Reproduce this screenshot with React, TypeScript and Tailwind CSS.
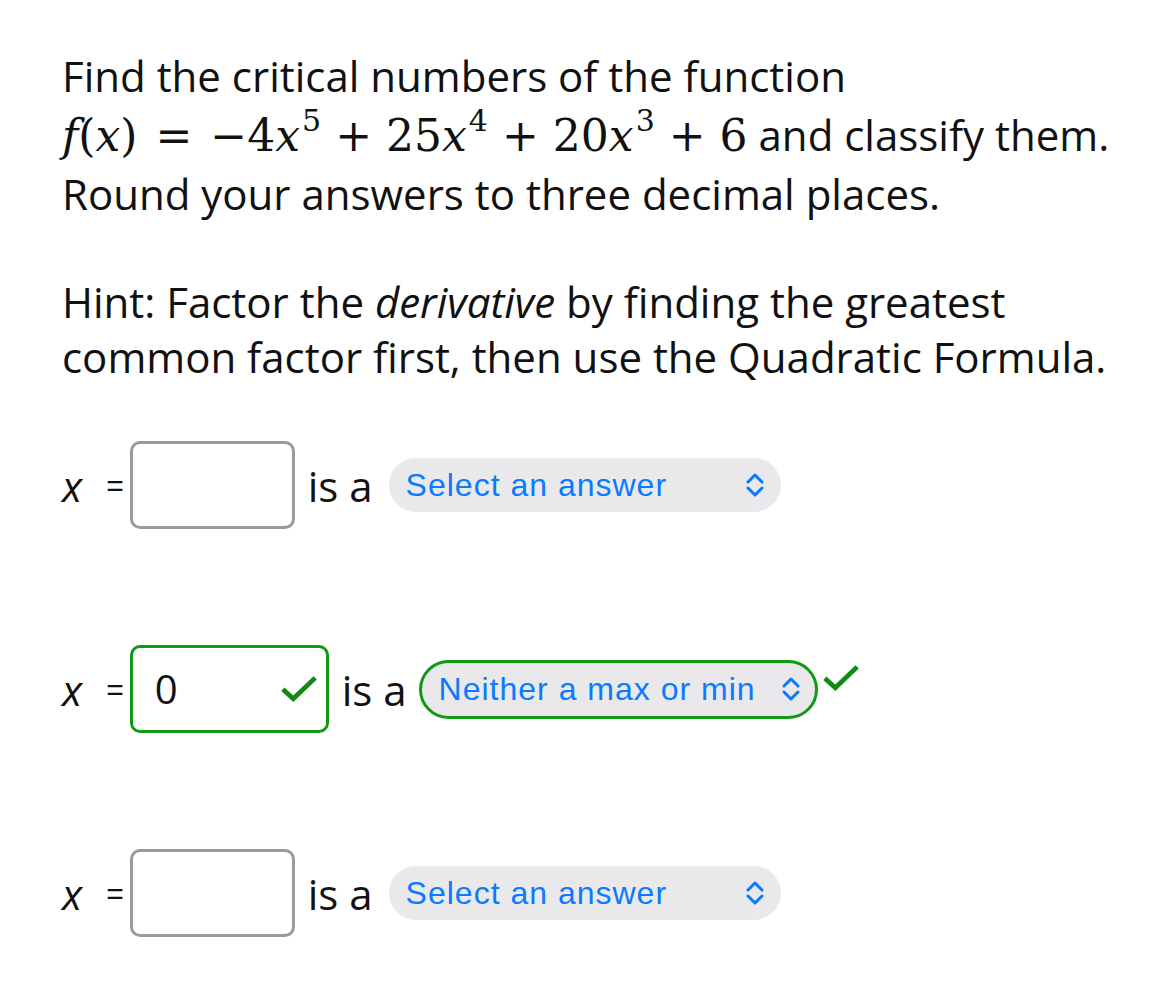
import React from "react";

const body = "font-['Open_Sans',sans-serif]";
const mathCls = "font-['DejaVu_Serif',serif] text-[44px] leading-none";

const Chevrons = () => (
  <svg width="20" height="26" viewBox="0 0 20 26" fill="none" stroke="#0a7aff" strokeWidth="3" strokeLinecap="round" strokeLinejoin="round">
    <path d="M3 10 L10 3 L17 10" />
    <path d="M3 16 L10 23 L17 16" />
  </svg>
);

const Check = ({ size = 36 }: { size?: number }) => (
  <svg width={size} height={size * 0.75} viewBox="0 0 40 30" fill="none" stroke="#118a11" strokeWidth="5" strokeLinejoin="miter">
    <path d="M3 15 L14 25 L37 3" />
  </svg>
);

const Sup = ({ children }: { children: React.ReactNode }) => (
  <span className="text-[30px] relative -top-[20px] ml-[2px]">{children}</span>
);

const Op = ({ children, wide }: { children: React.ReactNode; wide?: boolean }) => (
  <span className={wide ? "mx-[18px]" : "mx-[14px]"}>{children}</span>
);

type RowProps = {
  value?: string;
  correct?: boolean;
  answer: string;
};

const AnswerRow = ({ value, correct, answer }: RowProps) => (
  <div className="flex items-center h-[100px]">
    <span className={`${body} italic text-[42px]`}>x</span>
    <span className="font-['Liberation_Sans',sans-serif] text-[30px] ml-[24px] mr-[6px]">=</span>
    <div
      className={`flex items-center justify-between h-[88px] rounded-[10px] border-[3px] ${
        correct ? "w-[199px] border-[#119a11] pl-[22px] pr-[8px]" : "w-[165px] border-[#9a9a9a]"
      }`}
    >
      {value && <span className={`${body} text-[40px]`}>{value}</span>}
      {correct && <Check size={38} />}
    </div>
    <span className={`${body} text-[42px] ml-[13px] ${correct ? "mr-[12px]" : "mr-[16px]"}`}>is a</span>
    <div
      className={`flex items-center justify-between rounded-full bg-[#e9e9ec] font-['Liberation_Sans',sans-serif] text-[32px] tracking-[1px] text-[#0a7aff] ${
        correct
          ? "w-[399px] h-[59px] border-[3px] border-[#119a11] pl-[17px] pr-[14px]"
          : "w-[392px] h-[54px] pl-[17px] pr-[16px]"
      }`}
    >
      <span>{answer}</span>
      <Chevrons />
    </div>
    {correct && (
      <div className="ml-[4px] -mt-[22px]">
        <Check size={38} />
      </div>
    )}
  </div>
);

export default function App() {
  return (
    <div className={`bg-white w-[1170px] h-[981px] pl-[62px] pt-[46px] text-[#111] ${body}`}>
      <div className="text-[42px] leading-[59px]">
        <p>Find the critical numbers of the function</p>
        <p>
          <span className={mathCls}>
            <i>f</i>(<i>x</i>)<Op wide>=</Op>−4<i>x</i>
            <Sup>5</Sup>
            <Op>+</Op>25<i>x</i>
            <Sup>4</Sup>
            <Op>+</Op>20<i>x</i>
            <Sup>3</Sup>
            <Op>+</Op>6
          </span>{" "}
          and classify them.
        </p>
        <p>Round your answers to three decimal places.</p>
      </div>
      <div className="text-[42px] leading-[55px] mt-[51px]">
        <p>
          Hint: Factor the <i>derivative</i> by finding the greatest
        </p>
        <p>common factor first, then use the Quadratic Formula.</p>
      </div>
      <div className="flex flex-col gap-[104px] mt-[51px]">
        <AnswerRow answer="Select an answer" />
        <AnswerRow value="0" correct answer="Neither a max or min" />
        <AnswerRow answer="Select an answer" />
      </div>
    </div>
  );
}
